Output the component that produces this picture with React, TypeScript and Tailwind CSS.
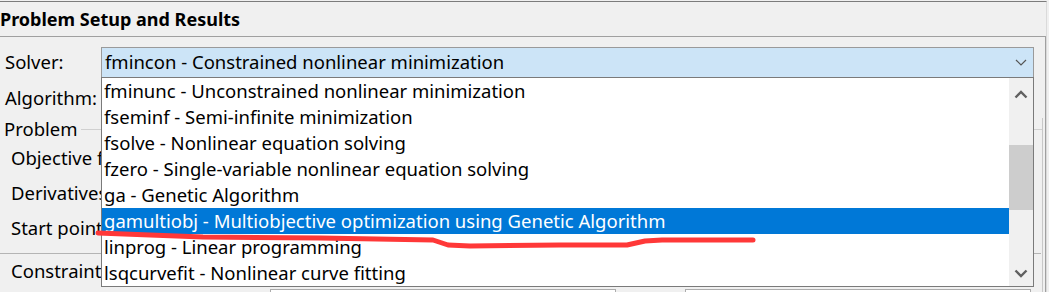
import React from 'react';

const items = [
  'fminunc - Unconstrained nonlinear minimization',
  'fseminf - Semi-infinite minimization',
  'fsolve - Nonlinear equation solving',
  'fzero - Single-variable nonlinear equation solving',
  'ga - Genetic Algorithm',
  'gamultiobj - Multiobjective optimization using Genetic Algorithm',
  'linprog - Linear programming',
  'lsqcurvefit - Nonlinear curve fitting',
];

const selected = 5;

const font = { fontFamily: '"Noto Sans", "Noto Sans CJK SC", sans-serif' };

// labels sit under the open list, so they are cut at its left edge
const Label: React.FC<{ children: React.ReactNode }> = ({ children }) => (
  <div className="w-[101px] h-full flex items-center pl-[11px] overflow-hidden whitespace-nowrap">{children}</div>
);

export default function App() {
  return (
    <div
      className="relative w-[1049px] h-[292px] overflow-hidden bg-[#f0f0f0] text-[18.5px] leading-none text-black"
      style={font}
    >
      <div className="mt-px w-[1047px] h-[291px] border-t border-r border-t-[#7c7c7c] border-r-[#dadada]">
        {/* header */}
        <div className="h-[34px] flex items-center font-bold text-[18px]">
          Problem Setup and Results
        </div>

        <div className="w-[1046px] h-[260px] border-t border-r border-[#a0a0a0]">
          {/* solver row */}
          <div className="flex items-center h-[31px] mt-[10px]">
            <div className="w-[101px] pl-[5px]">Solver:</div>
            <div className="w-[933px] h-[31px] flex items-center justify-between bg-[#cce4f7] border border-[#9a9a9a] pl-[3px] pr-[6px]">
              <span>fmincon - Constrained nonlinear minimization</span>
              <svg width="12" height="7" viewBox="0 0 12 7" className="text-[#555]">
                <path d="M1 1 L6 6 L11 1" fill="none" stroke="currentColor" strokeWidth="1.2" />
              </svg>
            </div>
          </div>

          {/* algorithm row */}
          <div className="flex items-center h-[40px] w-[101px] pl-[5px] overflow-hidden whitespace-nowrap">Algorithm:</div>

          {/* problem group */}
          <div className="w-[1043px] border-r border-[#c8c8c8]">
            <div className="flex items-center h-[22px] pl-[4px]">
              <span>Problem</span>
              <div className="flex-1 h-px bg-[#d0d0d0] ml-[3px]" />
            </div>
            <div className="h-[36px]"><Label>Objective function:</Label></div>
            <div className="h-[35px]"><Label>Derivatives:</Label></div>
            <div className="h-[35px]"><Label>Start point:</Label></div>
            <div className="w-[1041px] h-px bg-[#b4b4b4] mt-[7px]" />
            <div className="h-[35px]"><Label>Constraints:</Label></div>
            <div className="flex gap-[69px] pl-[270px]">
              <div className="w-[346px] h-[8px] bg-white border border-[#acacac]" />
              <div className="w-[346px] h-[8px] bg-white border border-[#acacac]" />
            </div>
          </div>
        </div>
      </div>

      {/* open dropdown list */}
      <div className="absolute left-[101px] top-[77px] w-[933px] h-[210px] bg-white border border-[#7a7a7a] flex">
        <div className="flex-1 flex flex-col">
          {items.map((it, i) => (
            <div
              key={it}
              className={`h-[26px] flex items-center pl-[2px] whitespace-nowrap ${
                i === selected ? 'bg-[#0078d7] text-white' : ''
              }`}
            >
              {it}
            </div>
          ))}
        </div>
        {/* scrollbar */}
        <div className="w-[24px] bg-[#f0f0f0] flex flex-col items-center">
          <div className="h-[33px] flex items-center justify-center">
            <svg width="14" height="9" viewBox="0 0 14 9">
              <path d="M1.5 7.5 L7 2 L12.5 7.5" fill="none" stroke="#606060" strokeWidth="2.4" />
            </svg>
          </div>
          <div className="mt-[34px] w-full h-[65px] bg-[#cdcdcd]" />
          <div className="flex-1" />
          <div className="h-[26px] flex items-center justify-center">
            <svg width="14" height="9" viewBox="0 0 14 9">
              <path d="M1.5 1.5 L7 7 L12.5 1.5" fill="none" stroke="#606060" strokeWidth="2.4" />
            </svg>
          </div>
        </div>
      </div>

      {/* red hand-drawn underline */}
      <svg className="absolute left-0 top-0 pointer-events-none" width="1049" height="292">
        <polyline
          points="98,233 150,235 203,237 320,238 433,240 448,245 470,246 560,245 627,245 645,241 662,240 753,240"
          fill="none"
          stroke="#ff3838"
          strokeWidth="5"
          strokeLinecap="round"
          strokeLinejoin="round"
        />
      </svg>
    </div>
  );
}
